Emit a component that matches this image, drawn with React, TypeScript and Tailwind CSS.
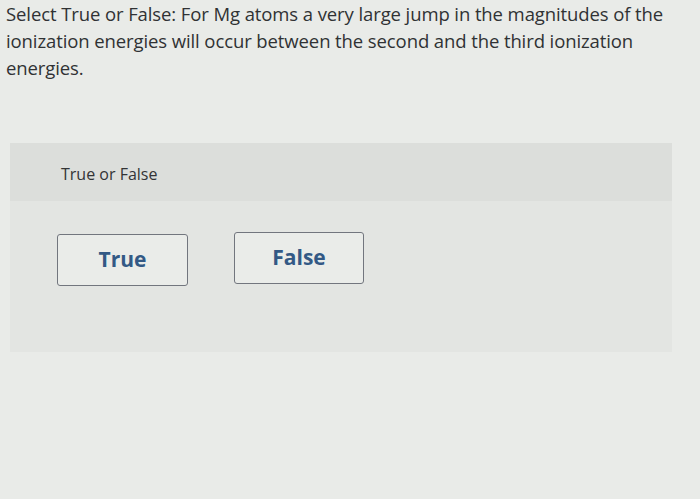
export default function App() {
  return (
    <div className="w-[700px] h-[499px] bg-[#e9ebe8] overflow-hidden" style={{ fontFamily: '"Open Sans", "Liberation Sans", sans-serif' }}>
      <div className="pl-[6px] pt-[0px] text-[18.5px] leading-[27px] text-[#303234] tracking-[-0.1px]">
        Select True or False: For Mg atoms a very large jump in the magnitudes of the
        <br />
        ionization energies will occur between the second and the third ionization
        <br />
        energies.
      </div>
      <div className="ml-[10px] mt-[62px] w-[662px] h-[209px] flex flex-col bg-[#e3e5e2]">
        <div className="h-[58px] bg-[#dcdedb] flex items-center pl-[51px] pt-[3px] text-[16px] text-[#333436]">
          True or False
        </div>
        <div className="flex gap-[46px] pl-[47px] pt-[33px]">
          <div className="w-[131px] h-[52px] rounded-[3px] border border-[#72767e] bg-[#eaece9] flex items-center justify-center text-[21px] font-bold text-[#335985]">
            True
          </div>
          <div className="w-[130px] h-[52px] rounded-[3px] border border-[#72767e] bg-[#eaece9] flex items-center justify-center text-[21px] font-bold text-[#335985] -mt-[2px]">
            False
          </div>
        </div>
      </div>
    </div>
  );
}
